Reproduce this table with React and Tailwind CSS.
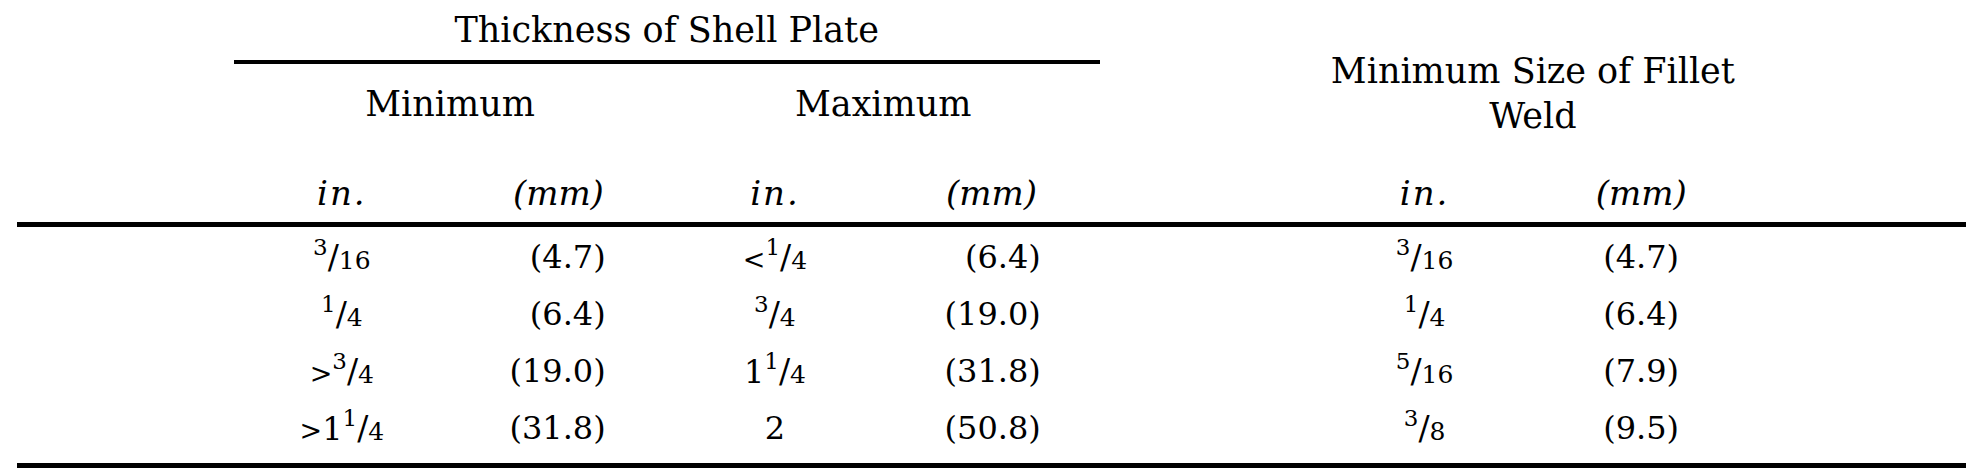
import React from "react";

const rows = [
  { minIn: ["", "3", "16"], minMm: "(4.7)", maxIn: ["<", "1", "4"], maxMm: "(6.4)", weldIn: ["3", "16"], weldMm: "(4.7)" },
  { minIn: ["", "1", "4"], minMm: "(6.4)", maxIn: ["", "3", "4"], maxMm: "(19.0)", weldIn: ["1", "4"], weldMm: "(6.4)" },
  { minIn: [">", "3", "4"], minMm: "(19.0)", maxIn: ["", "1", "4", "1"], maxMm: "(31.8)", weldIn: ["5", "16"], weldMm: "(7.9)" },
  { minIn: [">", "1", "4", "1"], minMm: "(31.8)", maxIn: ["2"], maxMm: "(50.8)", weldIn: ["3", "8"], weldMm: "(9.5)" },
];

function Frac({ n, d }) {
  return (
    <span>
      <span className="relative -top-[14px] text-[23px]">{n}</span>
      <span className="text-[33px]">/</span>
      <span className="text-[25px]">{d}</span>
    </span>
  );
}

// [prefix, numerator, denominator, whole]
function Inch({ v }) {
  if (v.length === 1) return <span>{v[0]}</span>;
  const [pre, n, d, whole] = v;
  return (
    <span>
      {pre && <span className="text-[27px]">{pre}</span>}
      {whole}
      <Frac n={n} d={d} />
    </span>
  );
}

export default function App() {
  return (
    <div className="bg-white min-h-screen pl-[17px] text-black font-['DejaVu_Serif',serif] text-[32px]">
      <div className="w-[1949px]">
        {/* header */}
        <div className="grid grid-cols-9 grid-rows-[64px_109px_49px] text-center text-[35px]">
          <div className="col-start-2 col-span-4 row-start-1 pt-[10px]">
            <div className="leading-[40px]">Thickness of Shell Plate</div>
            <div className="mt-[10px] h-[4px] bg-black" />
          </div>
          <div className="col-start-2 col-span-2 row-start-2 pt-[20px] leading-[40px]">Minimum</div>
          <div className="col-start-4 col-span-2 row-start-2 pt-[20px] leading-[40px]">Maximum</div>
          <div className="col-start-7 col-span-2 row-start-1 row-span-2 pt-[49px] leading-[45px]">
            Minimum Size of Fillet
            <br />
            Weld
          </div>

          <div className="col-start-2 row-start-3 italic text-[34px] leading-[40px] tracking-[2px]">in.</div>
          <div className="col-start-3 row-start-3 italic text-[34px] leading-[40px]">(mm)</div>
          <div className="col-start-4 row-start-3 italic text-[34px] leading-[40px] tracking-[2px]">in.</div>
          <div className="col-start-5 row-start-3 italic text-[34px] leading-[40px]">(mm)</div>
          <div className="col-start-7 row-start-3 italic text-[34px] leading-[40px] tracking-[2px]">in.</div>
          <div className="col-start-8 row-start-3 italic text-[34px] leading-[40px]">(mm)</div>
        </div>

        <div className="h-[5px] bg-black" />

        {/* body */}
        <div className="pt-[2px] pb-[6px]">
          {rows.map((r, i) => (
            <div key={i} className="grid grid-cols-9 h-[57px] leading-[57px]">
              <div />
              <div className="text-center">
                <Inch v={r.minIn} />
              </div>
              <div className="text-right pr-[61px]">{r.minMm}</div>
              <div className="text-center">
                <Inch v={r.maxIn} />
              </div>
              <div className="text-right pr-[59px]">{r.maxMm}</div>
              <div />
              <div className="text-center">
                <Frac n={r.weldIn[0]} d={r.weldIn[1]} />
              </div>
              <div className="text-center">{r.weldMm}</div>
              <div />
            </div>
          ))}
        </div>

        <div className="h-[5px] bg-black" />
      </div>
    </div>
  );
}
